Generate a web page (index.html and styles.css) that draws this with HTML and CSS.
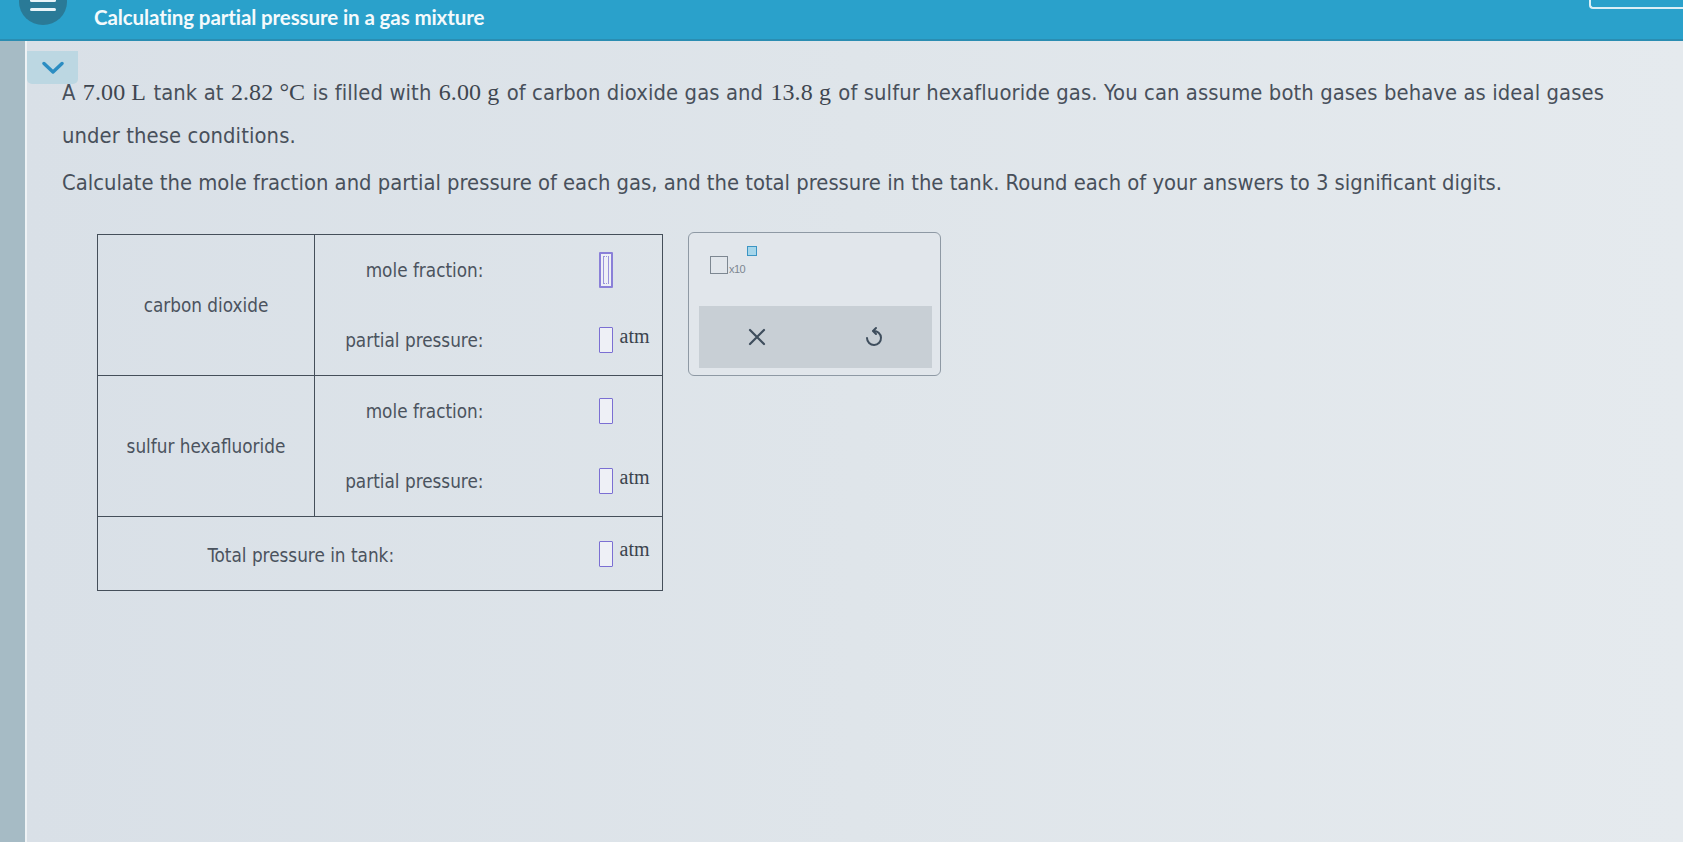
FILE: index.html
```html
<!DOCTYPE html>
<html lang="en">
<head>
<meta charset="utf-8">
<title>Calculating partial pressure in a gas mixture</title>
<link rel="stylesheet" href="styles.css">
</head>
<body>
<header class="topbar">
  <div class="menu-btn"><span></span><span></span></div>
  <h1 class="title">Calculating partial pressure in a gas mixture</h1>
  <div class="corner-btn"></div>
</header>
<div class="page">
  <div class="edge"></div>
  <main class="content">
    <button class="collapse" type="button" aria-label="collapse">
      <svg width="22" height="14" viewBox="0 0 22 14"><path d="M2 2.5 L11 11 L20 2.5" fill="none" stroke="#2b8dc2" stroke-width="3.4" stroke-linecap="round" stroke-linejoin="round"/></svg>
    </button>
    <div class="question">
      <p class="intro">A <span class="m">7.00 L</span> tank at <span class="m">2.82 °C</span> is filled with <span class="m">6.00 g</span> of carbon dioxide gas and <span class="m">13.8 g</span> of sulfur hexafluoride gas. You can assume both gases behave as ideal gases <span class="tail">under these conditions.</span></p>
      <p>Calculate the mole fraction and partial pressure of each gas, and the total pressure in the tank. Round each of your answers to 3 significant digits.</p>
    </div>
    <div class="work">
      <table class="answers">
        <colgroup><col class="c1"><col class="c2"><col class="c3"></colgroup>
        <tr>
          <td class="gas" rowspan="2">carbon dioxide</td>
          <td class="lbl">mole fraction:</td>
          <td class="ans"><div class="ans-in"><span class="box active"><span class="caret"></span></span></div></td>
        </tr>
        <tr>
          <td class="lbl">partial pressure:</td>
          <td class="ans"><div class="ans-in"><span class="box"></span><span class="unit">atm</span></div></td>
        </tr>
        <tr class="sep">
          <td class="gas" rowspan="2">sulfur hexafluoride</td>
          <td class="lbl">mole fraction:</td>
          <td class="ans"><div class="ans-in"><span class="box"></span></div></td>
        </tr>
        <tr>
          <td class="lbl">partial pressure:</td>
          <td class="ans"><div class="ans-in"><span class="box"></span><span class="unit">atm</span></div></td>
        </tr>
        <tr class="sep">
          <td class="lbl total" colspan="2">Total pressure in tank:</td>
          <td class="ans"><div class="ans-in"><span class="box"></span><span class="unit">atm</span></div></td>
        </tr>
      </table>
      <div class="keypad">
        <div class="kp-top">
          <span class="sci"><span class="sq"></span><span class="x10">x10</span><span class="sup"></span></span>
        </div>
        <div class="kp-bar">
          <button class="kp-btn" type="button" aria-label="clear">
            <svg width="20" height="20" viewBox="0 0 20 20"><path d="M3 3 L17 17 M17 3 L3 17" fill="none" stroke="#3f4e5d" stroke-width="2.2" stroke-linecap="round"/></svg>
          </button>
          <button class="kp-btn" type="button" aria-label="undo">
            <svg width="20" height="22" viewBox="0 0 20 22"><path d="M9.5 5 A7 7 0 1 1 3 12" fill="none" stroke="#3f4e5d" stroke-width="2" stroke-linecap="round"/><path d="M12 2 L9 5 L12 8" fill="none" stroke="#3f4e5d" stroke-width="2" stroke-linecap="round" stroke-linejoin="round"/></svg>
          </button>
        </div>
      </div>
    </div>
  </main>
</div>
</body>
</html>
```

FILE: styles.css
```css
html, body {
  margin: 0;
  padding: 0;
}

body {
  width: 1683px;
  height: 842px;
  overflow: hidden;
  background: #dde3e9;
  font-family: "DejaVu Sans Condensed", "DejaVu Sans", sans-serif;
  color: #48505b;
}

.topbar {
  height: 39px;
  background: #2aa1cb;
  display: flex;
  align-items: center;
  overflow: hidden;
  box-shadow: 0 2px 0 #2a8db2;
  position: relative;
  z-index: 1;
}

.menu-btn {
  flex: none;
  align-self: flex-start;
  width: 48px;
  height: 46px;
  margin-top: -21px;
  margin-left: 19px;
  border-radius: 50%;
  background: #2a7a97;
  display: flex;
  flex-direction: column;
  align-items: center;
  justify-content: flex-end;
  gap: 6px;
  padding-bottom: 14px;
  box-sizing: border-box;
}

.menu-btn span {
  width: 26px;
  height: 3px;
  border-radius: 2px;
  background: #e8f4f8;
}

.title {
  margin: 0 0 6px 27px;
  font-family: Lato, "Open Sans", sans-serif;
  font-weight: 700;
  font-size: 20.5px;
  color: #f4fafc;
  letter-spacing: -0.1px;
}

.corner-btn {
  margin-left: auto;
  align-self: flex-start;
  width: 92px;
  height: 7px;
  border: 2px solid #dbeff6;
  border-top: 0;
  border-right: 0;
  border-radius: 0 0 0 4px;
}

.page {
  display: flex;
  height: 803px;
}

.edge {
  flex: none;
  width: 25px;
  background: #a6bbc5;
  border-right: 2px solid #eef2f5;
}

.content {
  flex: 1;
  background: linear-gradient(90deg, #d9e0e7 0%, #dfe5ea 50%, #e5eaee 100%);
}

.collapse {
  display: flex;
  align-items: center;
  justify-content: center;
  width: 51px;
  height: 33px;
  margin: 12px 0 0 0;
  padding: 0;
  border: 0;
  border-radius: 0 0 5px 5px;
  background: #bcd7e2;
}

.question {
  margin: -13px 0 0 35px;
  width: 1590px;
  font-size: 21.8px;
  line-height: 43px;
}

.question p {
  margin: 0;
}

.question p + p {
  margin-top: 4px;
}

.question .intro {
  letter-spacing: 0.1px;
}

.m {
  font-family: "Liberation Serif", serif;
  font-size: 24px;
  color: #3e4650;
  margin: 0 1px;
}

.work {
  display: flex;
  align-items: flex-start;
  gap: 25px;
  margin: 30px 0 0 70px;
}

.answers {
  border-collapse: collapse;
  width: 565px;
  table-layout: fixed;
  border: 1.5px solid #454f5a;
  font-size: 18.8px;
  color: #4b535e;
}

.c1 { width: 217px; }
.c2 { width: 189px; }
.c3 { width: 159px; }

.answers td {
  height: 70px;
  padding: 0;
  vertical-align: middle;
}

.answers tr.sep td {
  border-top: 1.5px solid #454f5a;
}

.gas {
  text-align: center;
  border-right: 1.5px solid #454f5a;
}

.lbl {
  text-align: right;
  padding-right: 20px !important;
}

.lbl.total {
  text-align: center;
  padding-right: 0 !important;
  padding-top: 3px !important;
}

.ans-in {
  display: flex;
  align-items: center;
  gap: 7px;
  padding-left: 95px;
}

.box {
  flex: none;
  width: 12px;
  height: 24px;
  border: 1.5px solid #7b6fd3;
  background: #eef0f6;
  border-radius: 1px;
}

.box.active {
  width: 10px;
  height: 32px;
  border: 2px solid #8a80d8;
  display: flex;
  align-items: center;
  justify-content: center;
}

.caret {
  width: 4px;
  height: 26px;
  border: 1px solid #9a92dc;
  border-top-style: dotted;
  border-bottom-style: dotted;
}

.unit {
  font-family: "Liberation Serif", serif;
  font-size: 20px;
  color: #3b434d;
  margin-bottom: 8px;
}

.keypad {
  flex: none;
  box-sizing: border-box;
  width: 253px;
  height: 144px;
  margin-top: -2px;
  border: 1.5px solid #8e99a4;
  border-radius: 6px;
  padding: 0 8px 7px 10px;
  display: flex;
  flex-direction: column;
  background: #e1e6eb;
}

.kp-top {
  height: 73px;
  box-sizing: border-box;
  padding: 23px 0 0 11px;
}

.sci {
  display: inline-flex;
  align-items: flex-end;
}

.sq {
  width: 16px;
  height: 16px;
  border: 1.5px solid #7d8791;
}

.x10 {
  font-family: "Liberation Sans", sans-serif;
  font-size: 11px;
  color: #7d8791;
  margin-left: 1px;
  line-height: 10px;
  letter-spacing: -0.5px;
}

.sup {
  width: 8px;
  height: 8px;
  border: 1.5px solid #3b95c4;
  background: #a6d6ea;
  align-self: flex-start;
  margin-top: -10px;
  margin-left: 2px;
}

.kp-bar {
  flex: 1;
  display: flex;
  background: #c8cfd5;
}

.kp-btn {
  flex: 1;
  display: flex;
  align-items: center;
  justify-content: center;
  border: 0;
  background: transparent;
  padding: 0;
}
```
